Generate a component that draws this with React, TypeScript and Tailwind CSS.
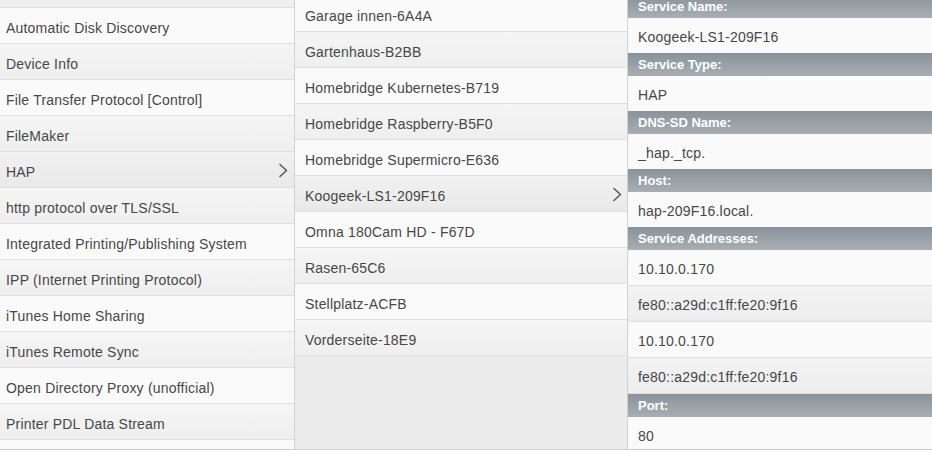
import React from 'react'

const font = { fontFamily: '"Helvetica Neue", "Liberation Sans", Arial, sans-serif' }

const services = [
  '',
  'Automatic Disk Discovery',
  'Device Info',
  'File Transfer Protocol [Control]',
  'FileMaker',
  'HAP',
  'http protocol over TLS/SSL',
  'Integrated Printing/Publishing System',
  'IPP (Internet Printing Protocol)',
  'iTunes Home Sharing',
  'iTunes Remote Sync',
  'Open Directory Proxy (unofficial)',
  'Printer PDL Data Stream',
  '',
]

const hosts = [
  'Garage innen-6A4A',
  'Gartenhaus-B2BB',
  'Homebridge Kubernetes-B719',
  'Homebridge Raspberry-B5F0',
  'Homebridge Supermicro-E636',
  'Koogeek-LS1-209F16',
  'Omna 180Cam HD - F67D',
  'Rasen-65C6',
  'Stellplatz-ACFB',
  'Vorderseite-18E9',
]

function Chevron() {
  return (
    <svg width="10" height="15" viewBox="0 0 10 15" className="shrink-0 -mt-[4px]">
      <polyline points="2,1.5 8.5,7.5 2,13.5" fill="none" stroke="#5a5a5a" strokeWidth="1.6" strokeLinejoin="round" strokeLinecap="round" />
    </svg>
  )
}

function Row({ label, odd, selected, pad }: { label: string; odd: boolean; selected?: boolean; pad: string }) {
  const bg = selected
    ? 'bg-gradient-to-b from-[#f1f1f1] to-[#e9e9e9]'
    : odd
      ? 'bg-gradient-to-b from-[#f5f5f5] to-[#efefef]'
      : 'bg-[#fafafa]'
  return (
    <div className={`h-[36px] flex items-center justify-between pt-[5px] border-b border-[#dedede] ${pad} ${bg}`}>
      <span className="truncate">{label}</span>
      {selected && <Chevron />}
    </div>
  )
}

function Header({ children }: { children: React.ReactNode }) {
  return (
    <div className="h-[23px] flex items-center px-[10px] bg-gradient-to-b from-[#8a939a] to-[#a8aeb3] text-white text-[13px] font-bold tracking-normal">
      {children}
    </div>
  )
}

function Value({ children }: { children: React.ReactNode }) {
  return (
    <div className="h-[35px] flex items-center pt-[4px] px-[10px] bg-[#fafafa]">
      {children}
    </div>
  )
}

function Address({ children, gray }: { children: React.ReactNode; gray?: boolean }) {
  return (
    <div className={`h-[36px] flex items-center pt-[4px] px-[10px] border-b border-[#dedede] ${gray ? 'bg-gradient-to-b from-[#f3f3f3] to-[#ededed]' : 'bg-[#fafafa]'}`}>
      {children}
    </div>
  )
}

export default function App() {
  return (
    <div className="w-[932px] h-[452px] bg-white overflow-hidden text-[14px] tracking-[0.2px] text-[#474747]" style={font}>
      <div className="flex h-[450px] border-b border-[#cfcfcf]">
        {/* services */}
        <div className="w-[295px] shrink-0 border-r border-[#d2d2d2] overflow-hidden bg-[#fafafa]">
          <div className="-mt-[28px]">
            {services.map((s, i) => (
              <Row key={i} label={s} odd={i % 2 === 0} selected={s === 'HAP'} pad="pl-[6px] pr-[6px]" />
            ))}
          </div>
        </div>

        {/* hosts */}
        <div className="w-[333px] shrink-0 border-r border-[#d2d2d2] overflow-hidden bg-[#ececec]">
          <div className="-mt-[4px]">
            {hosts.map((h, i) => (
              <Row key={h} label={h} odd={i % 2 === 1} selected={h === 'Koogeek-LS1-209F16'} pad="pl-[10px] pr-[5px]" />
            ))}
          </div>
        </div>

        {/* details */}
        <div className="flex-1 overflow-hidden bg-[#fafafa]">
          <div className="-mt-[5px]">
            <Header>Service Name:</Header>
            <Value>Koogeek-LS1-209F16</Value>
            <Header>Service Type:</Header>
            <Value>HAP</Value>
            <Header>DNS-SD Name:</Header>
            <Value>_hap._tcp.</Value>
            <Header>Host:</Header>
            <Value>hap-209F16.local.</Value>
            <Header>Service Addresses:</Header>
            <Address>10.10.0.170</Address>
            <Address gray>fe80::a29d:c1ff:fe20:9f16</Address>
            <Address>10.10.0.170</Address>
            <Address gray>fe80::a29d:c1ff:fe20:9f16</Address>
            <Header>Port:</Header>
            <Value>80</Value>
          </div>
        </div>
      </div>
    </div>
  )
}
